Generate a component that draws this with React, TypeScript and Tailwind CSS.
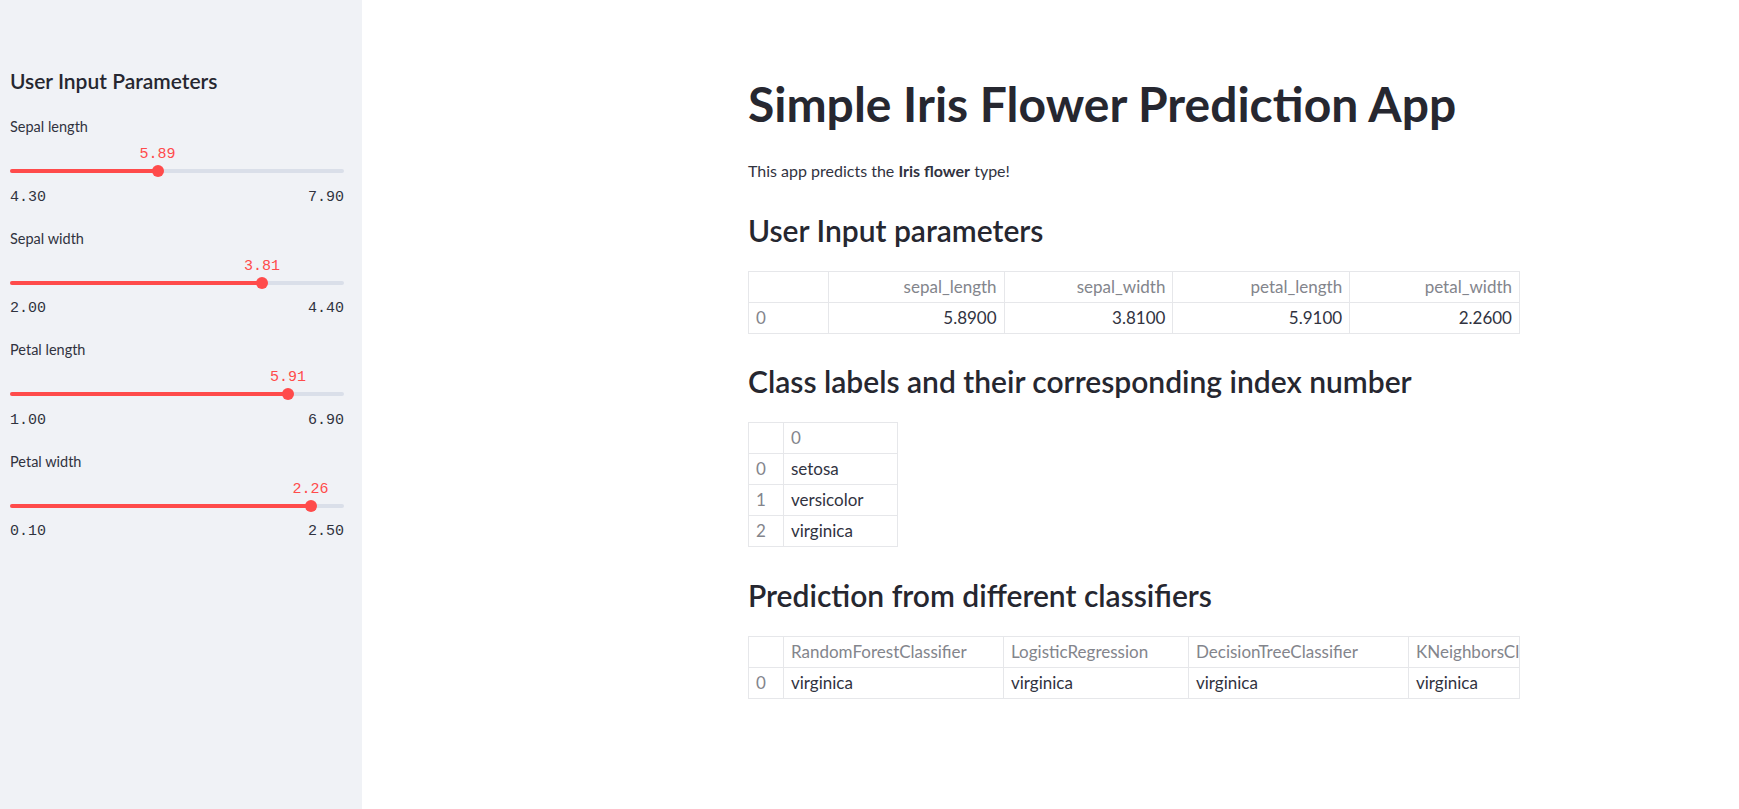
import React from "react";

const sliders = [
  { label: "Sepal length", min: 4.3, max: 7.9, value: 5.89 },
  { label: "Sepal width", min: 2.0, max: 4.4, value: 3.81 },
  { label: "Petal length", min: 1.0, max: 6.9, value: 5.91 },
  { label: "Petal width", min: 0.1, max: 2.5, value: 2.26 },
];

const Slider = ({ label, min, max, value }: { label: string; min: number; max: number; value: number }) => {
  const pct = ((value - min) / (max - min)) * 100;
  return (
    <div className="flex flex-col">
      <div className="text-[14.5px] leading-[20px] text-[#31333f]">{label}</div>
      <div className="relative mt-[9px] h-[31px]">
        <div
          className="absolute top-0 -translate-x-1/2 text-[15px] leading-[18px] text-[#ff4b4b] font-['Liberation_Mono',monospace]"
          style={{ left: `${pct}%` }}
        >
          {value.toFixed(2)}
        </div>
        <div className="absolute left-0 right-0 top-[23px] h-[4px] rounded-full bg-[#dadfe9]" />
        <div className="absolute left-0 top-[23px] h-[4px] rounded-full bg-[#ff4b4b]" style={{ width: `${pct}%` }} />
        <div
          className="absolute top-[19px] h-[12px] w-[12px] -translate-x-1/2 rounded-full bg-[#ff4b4b]"
          style={{ left: `${pct}%` }}
        />
      </div>
      <div className="mt-[11.5px] flex justify-between text-[15px] leading-[18px] text-[#31333f] font-['Liberation_Mono',monospace]">
        <span>{min.toFixed(2)}</span>
        <span>{max.toFixed(2)}</span>
      </div>
    </div>
  );
};

const cell = "border border-[#e6e7ea] px-[7px] h-[31px] whitespace-nowrap overflow-hidden";

export default function App() {
  return (
    <div className="flex min-h-[809px] bg-white font-['Lato',sans-serif] text-[#31333f]">
      <aside className="w-[362px] shrink-0 bg-[#f0f2f6] pl-[10px] pr-[18px] pt-[67px]">
        <h2 className="text-[21px] leading-[28px] font-semibold text-[#262730]">User Input Parameters</h2>
        <div className="mt-[22px] flex flex-col gap-[22px]">
          {sliders.map((s) => (
            <Slider key={s.label} {...s} />
          ))}
        </div>
      </aside>
      <main className="flex-1 pl-[386px] pt-[78px]">
        <div className="w-[772px]">
          <h1 className="text-[48px] leading-[52px] font-bold text-[#262730]">Simple Iris Flower Prediction App</h1>
          <p className="mt-[29px] text-[16px] leading-[24px]">
            This app predicts the <strong className="font-bold">Iris flower</strong> type!
          </p>

          <h2 className="mt-[29px] text-[30px] leading-[36px] font-semibold text-[#262730]">User Input parameters</h2>
          <table className="mt-[23px] table-fixed border-collapse text-[17px]">
            <colgroup>
              <col className="w-[80px]" />
              <col className="w-[176px]" />
              <col className="w-[169px]" />
              <col className="w-[177px]" />
              <col className="w-[170px]" />
            </colgroup>
            <thead>
              <tr className="text-[#83858c]">
                <th className={cell}></th>
                <th className={`${cell} text-right font-normal`}>sepal_length</th>
                <th className={`${cell} text-right font-normal`}>sepal_width</th>
                <th className={`${cell} text-right font-normal`}>petal_length</th>
                <th className={`${cell} text-right font-normal`}>petal_width</th>
              </tr>
            </thead>
            <tbody>
              <tr>
                <td className={`${cell} text-[#83858c]`}>0</td>
                <td className={`${cell} text-right`}>5.8900</td>
                <td className={`${cell} text-right`}>3.8100</td>
                <td className={`${cell} text-right`}>5.9100</td>
                <td className={`${cell} text-right`}>2.2600</td>
              </tr>
            </tbody>
          </table>

          <h2 className="mt-[29px] text-[30px] leading-[36px] font-semibold text-[#262730]">
            Class labels and their corresponding index number
          </h2>
          <table className="mt-[23px] table-fixed border-collapse text-[17px]">
            <colgroup>
              <col className="w-[35px]" />
              <col className="w-[114px]" />
            </colgroup>
            <thead>
              <tr>
                <th className={cell}></th>
                <th className={`${cell} text-left font-normal text-[#83858c]`}>0</th>
              </tr>
            </thead>
            <tbody>
              {["setosa", "versicolor", "virginica"].map((v, i) => (
                <tr key={v}>
                  <td className={`${cell} text-[#83858c]`}>{i}</td>
                  <td className={cell}>{v}</td>
                </tr>
              ))}
            </tbody>
          </table>

          <h2 className="mt-[30px] text-[30px] leading-[36px] font-semibold text-[#262730]">
            Prediction from different classifiers
          </h2>
          <div className="mt-[23px] w-[772px] overflow-hidden border-r border-[#e6e7ea]">
            <table className="w-[900px] table-fixed border-collapse text-[17px]">
              <colgroup>
                <col className="w-[35px]" />
                <col className="w-[220px]" />
                <col className="w-[185px]" />
                <col className="w-[220px]" />
                <col className="w-[240px]" />
              </colgroup>
              <thead>
                <tr className="text-[#83858c]">
                  <th className={cell}></th>
                  <th className={`${cell} text-left font-normal`}>RandomForestClassifier</th>
                  <th className={`${cell} text-left font-normal`}>LogisticRegression</th>
                  <th className={`${cell} text-left font-normal`}>DecisionTreeClassifier</th>
                  <th className={`${cell} text-left font-normal`}>KNeighborsClassifier</th>
                </tr>
              </thead>
              <tbody>
                <tr>
                  <td className={`${cell} text-[#83858c]`}>0</td>
                  <td className={cell}>virginica</td>
                  <td className={cell}>virginica</td>
                  <td className={cell}>virginica</td>
                  <td className={cell}>virginica</td>
                </tr>
              </tbody>
            </table>
          </div>
        </div>
      </main>
    </div>
  );
}
